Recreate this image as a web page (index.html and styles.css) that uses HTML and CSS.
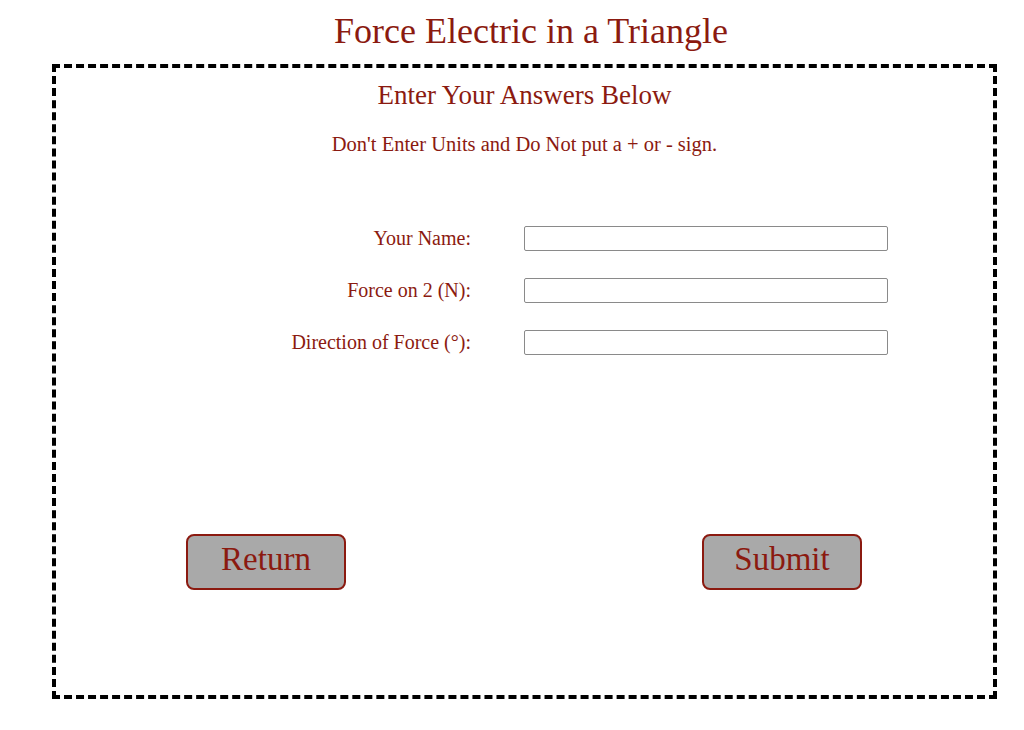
FILE: index.html
```html
<!DOCTYPE html>
<html lang="en">
<head>
  <meta charset="UTF-8">
  <meta name="viewport" content="width=device-width, initial-scale=1.0">
  <title>Force Electric in a Triangle</title>
  <link rel="stylesheet" href="styles.css">
</head>
<body>
  <h1 class="title">Force Electric in a Triangle</h1>

  <div class="answer-box">
    <h2>Enter Your Answers Below</h2>
    <p class="note">Don't Enter Units and Do Not put a + or - sign.</p>

    <form class="answers" onsubmit="return false;">
      <label for="name">Your Name:</label>
      <input type="text" id="name" name="name">

      <label for="force">Force on 2 (N):</label>
      <input type="text" id="force" name="force">

      <label for="direction">Direction of Force (&deg;):</label>
      <input type="text" id="direction" name="direction">
    </form>

    <div class="buttons">
      <button type="button" class="btn">Return</button>
      <button type="button" class="btn">Submit</button>
    </div>
  </div>
</body>
</html>
```

FILE: styles.css
```css
body {
  font-family: "Liberation Serif", "Times New Roman", serif;
  color: #8b1a10;
  background-color: white;
  margin: 8px;
}
.title {
  font-size: 36px;
  font-weight: normal;
  text-align: center;
  margin: 0 0 0 38px;
  line-height: 46px;
}
.answer-box {
  width: 945px;
  height: 635px;
  box-sizing: border-box;
  margin: 10px 0 0 44px;
  border: 4px dashed black;
  text-align: center;
}
h2 {
  font-size: 27px;
  font-weight: normal;
  margin: 12px 0 0;
  line-height: 30px;
}
.note {
  font-size: 20.5px;
  margin: 22px 0 0;
  line-height: 24px;
}
.answers {
  display: grid;
  grid-template-columns: 415px 364px;
  column-gap: 53px;
  row-gap: 27px;
  align-items: center;
  margin-top: 70px;
}
.answers label {
  text-align: right;
  font-size: 20px;
}
.answers input {
  height: 25px;
  box-sizing: border-box;
  border: 1px solid #8a8a8a;
  border-radius: 2px;
  margin: 0;
}
.buttons {
  display: flex;
  gap: 356px;
  padding-left: 130px;
  margin-top: 179px;
}
.btn {
  width: 160px;
  height: 56px;
  background-color: #a9a9a9;
  color: #8b1a10;
  border: 2px solid #8b1a10;
  border-radius: 8px;
  font-family: "Liberation Serif", "Times New Roman", serif;
  font-size: 33px;
  padding: 0 0 6px;
}
```
